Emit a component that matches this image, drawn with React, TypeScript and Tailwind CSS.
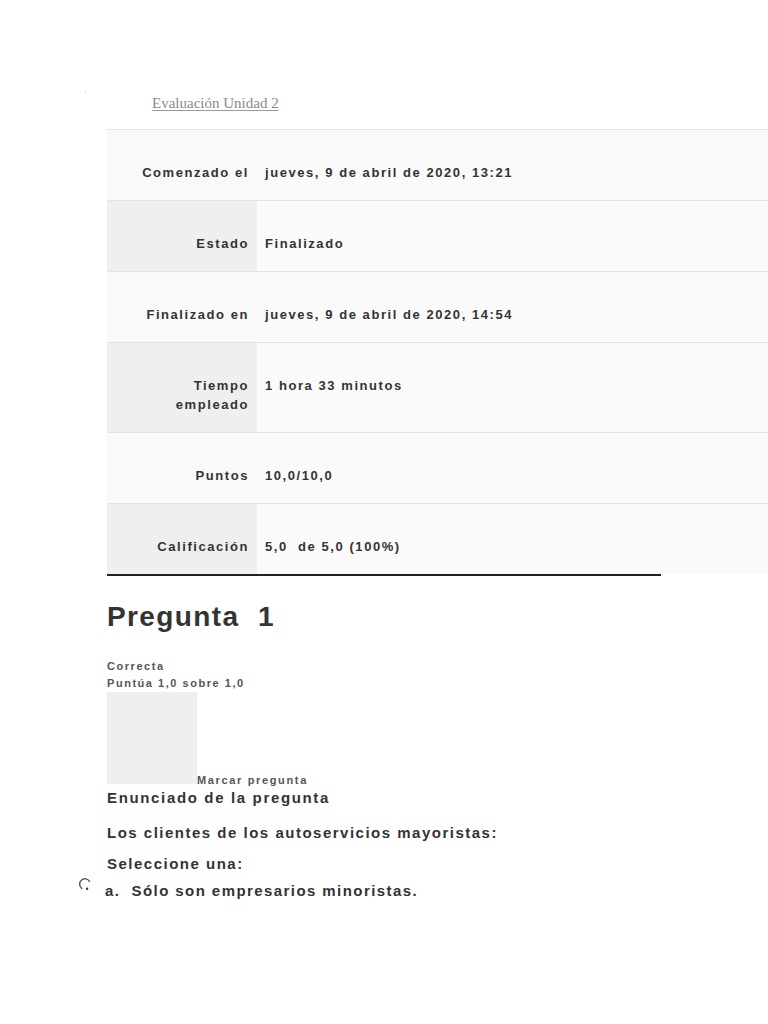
import React from 'react';

type Row = { label: React.ReactNode; value: string; shaded: boolean };

const rows: Row[] = [
  { label: 'Comenzado el', value: 'jueves, 9 de abril de 2020, 13:21', shaded: false },
  { label: 'Estado', value: 'Finalizado', shaded: true },
  { label: 'Finalizado en', value: 'jueves, 9 de abril de 2020, 14:54', shaded: false },
  {
    label: (
      <>
        Tiempo
        <br />
        empleado
      </>
    ),
    value: '1 hora 33 minutos',
    shaded: true,
  },
  { label: 'Puntos', value: '10,0/10,0', shaded: false },
  { label: 'Calificación', value: '5,0  de 5,0 (100%)', shaded: true },
];

const App: React.FC = () => {
  return (
    <div className="min-h-[1024px] w-[768px] overflow-hidden bg-white font-['Liberation_Sans',Arial,sans-serif] text-[#333]">
      <div className="relative pt-[91px]">
        <span className="absolute left-[85px] top-[92px] h-px w-px bg-[#bbb]" />
        <a className="ml-[152px] font-['Liberation_Serif','Times_New_Roman',serif] text-[15px] leading-5 text-[#8a8a8a] underline decoration-[#9a9a9a] underline-offset-2">
          Evaluación Unidad 2
        </a>
      </div>

      <div className="ml-[107px] mt-[14px] border-t border-[#e3e3e3]">
        {rows.map((r, i) => (
          <div key={i} className="flex border-b border-[#e3e3e3] bg-[#f9f9f9] last:border-b-0">
            <div
              className={`w-[150px] shrink-0 pr-[8px] pt-[33px] pb-[18px] text-right text-[13px] font-bold leading-[19px] tracking-[0.12em] ${
                r.shaded ? 'bg-[#efefef]' : 'bg-[#f9f9f9]'
              }`}
            >
              {r.label}
            </div>
            <div className="flex-1 whitespace-pre bg-[#fafafa] pl-[8px] pt-[33px] pb-[18px] text-[13px] font-bold leading-[19px] tracking-[0.12em]">
              {r.value}
            </div>
          </div>
        ))}
      </div>
      <div className="ml-[107px] h-[1.5px] w-[554px] bg-[#222]" />

      <h2 className="ml-[107px] mt-[24px] whitespace-pre text-[28px] font-bold leading-[34px] tracking-[0.05em] text-[#333]">
        Pregunta  1
      </h2>

      <div className="ml-[107px] mt-[24px] text-[11px] font-bold leading-[17px] tracking-[0.14em] text-[#555]">
        <div>Correcta</div>
        <div>Puntúa 1,0 sobre 1,0</div>
      </div>

      <div className="ml-[107px] flex items-end">
        <div className="h-[92px] w-[90px] bg-[#efefef]" />
        <span className="-mb-[3px] text-[11px] font-bold leading-[14px] tracking-[0.15em] text-[#555]">
          Marcar pregunta
        </span>
      </div>

      <div className="ml-[107px] mt-[4px] text-[15px] font-bold leading-[20px] tracking-[0.11em] text-[#333]">
        Enunciado de la pregunta
      </div>
      <div className="ml-[107px] mt-[15px] text-[15px] font-bold leading-[20px] tracking-[0.1em] text-[#333]">
        Los clientes de los autoservicios mayoristas:
      </div>
      <div className="ml-[107px] mt-[11px] text-[15px] font-bold leading-[20px] tracking-[0.1em] text-[#333]">
        Seleccione una:
      </div>
      <div className="mt-[7px] flex items-start">
        <svg className="ml-[78px] mt-[-4px]" width="15" height="15" viewBox="0 0 14 14">
          <path d="M11 4.5 A5 5 0 1 0 4 11" fill="none" stroke="#555" strokeWidth="1.4" />
          <circle cx="8.5" cy="11" r="1.1" fill="#333" />
        </svg>
        <div className="ml-[12px] whitespace-pre text-[15px] font-bold leading-[20px] tracking-[0.095em] text-[#333]">
          a.  Sólo son empresarios minoristas.
        </div>
      </div>
    </div>
  );
};

export default App;
